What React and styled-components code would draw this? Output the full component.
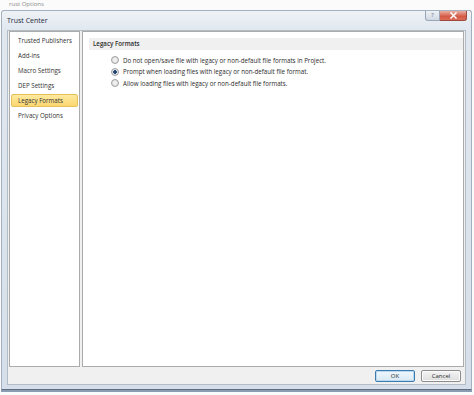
import styled, { createGlobalStyle } from "styled-components";

const GlobalStyle = createGlobalStyle`
  html, body {
    margin: 0;
    padding: 0;
    background: #ffffff;
  }
  body {
    font-family: "Open Sans", "Noto Sans", "Liberation Sans", sans-serif;
    width: 474px;
    height: 395px;
    overflow: hidden;
  }
`;

const navItems = [
  "Trusted Publishers",
  "Add-ins",
  "Macro Settings",
  "DEP Settings",
  "Legacy Formats",
  "Privacy Options",
];

const options = [
  { label: "Do not open/save file with legacy or non-default file formats in Project.", checked: false },
  { label: "Prompt when loading files with legacy or non-default file format.", checked: true },
  { label: "Allow loading files with legacy or non-default file formats.", checked: false },
];

function App() {
  return (
    <>
      <GlobalStyle />
      <Screen>
        <ParentTitle>rust Options</ParentTitle>
        <Window>
          <TitleBar>
            <TitleText>Trust Center</TitleText>
            <Controls>
              <HelpButton>?</HelpButton>
              <CloseButton>
                <svg width="9" height="7" viewBox="0 0 9 7">
                  <path d="M1.5 0.5 L7.5 6.5 M7.5 0.5 L1.5 6.5" stroke="#fff" strokeWidth="1.5" />
                </svg>
              </CloseButton>
            </Controls>
          </TitleBar>
          <Body>
            <Panels>
              <Nav>
                {navItems.map((item) => (
                  <NavItem key={item} $active={item === "Legacy Formats"}>
                    {item}
                  </NavItem>
                ))}
              </Nav>
              <Main>
                <SectionHeader>Legacy Formats</SectionHeader>
                <Options>
                  {options.map((o) => (
                    <OptionRow key={o.label}>
                      <Radio $checked={o.checked} />
                      <span>{o.label}</span>
                    </OptionRow>
                  ))}
                </Options>
              </Main>
            </Panels>
            <Footer>
              <Button $default>OK</Button>
              <Button>Cancel</Button>
            </Footer>
          </Body>
        </Window>
      </Screen>
    </>
  );
}

export default App;

const Screen = styled.div`
  width: 474px;
  height: 395px;
  background: #fbfbfb;
  display: flex;
  flex-direction: column;
`;

const ParentTitle = styled.div`
  height: 10px;
  padding-left: 9px;
  font-size: 6px;
  line-height: 9px;
  color: #8a8a8a;
  white-space: nowrap;
`;

const Window = styled.div`
  flex: 1;
  margin: 0 2px 5px 1px;
  display: flex;
  flex-direction: column;
  background: linear-gradient(180deg, #eef2f6 0%, #e0e7ef 20px, #d6dfe9 100%);
  border: 1px solid #a3b0bf;
  border-bottom: 1px solid #5d6f86;
  border-radius: 3px 3px 0 0;
  box-shadow: 0 2px 0 #8c9cb0;
`;

const TitleBar = styled.div`
  height: 19px;
  display: flex;
  align-items: center;
  justify-content: space-between;
  padding-left: 5px;
`;

const TitleText = styled.div`
  font-size: 7px;
  color: #1d2a3a;
`;

const Controls = styled.div`
  display: flex;
  align-self: flex-start;
  margin-right: 4px;
`;

const HelpButton = styled.div`
  width: 13px;
  height: 9px;
  border: 1px solid #9aa6b5;
  border-top: none;
  border-radius: 0 0 0 3px;
  background: linear-gradient(180deg, #eef2f6, #cfd8e2);
  font-size: 5.5px;
  line-height: 9px;
  text-align: center;
  color: #5a6474;
`;

const CloseButton = styled.div`
  width: 26px;
  height: 9px;
  border: 1px solid #9c4a3e;
  border-top: none;
  border-left: none;
  border-radius: 0 0 3px 0;
  background: linear-gradient(180deg, #eab0a4, #d45a45 60%, #dc6c58);
  display: flex;
  align-items: center;
  justify-content: center;
`;

const Body = styled.div`
  flex: 1;
  display: flex;
  flex-direction: column;
  background: #f0f0f0;
  margin: 0 5px 4px 5px;
  border: 1px solid #b3bdc8;
`;

const Panels = styled.div`
  flex: 1;
  display: flex;
  gap: 2px;
  padding: 0 1px;
`;

const Nav = styled.div`
  width: 69px;
  background: #ffffff;
  border: 1px solid #ababab;
  padding-top: 2px;
  display: flex;
  flex-direction: column;
  gap: 2px;
`;

const NavItem = styled.div`
  font-size: 6.2px;
  color: #333;
  height: 11px;
  line-height: 11px;
  padding-left: 6px;
  margin: 0 1px;
  border-radius: 2px;
  white-space: nowrap;
  background: ${(p) => (p.$active ? "linear-gradient(180deg, #fdeaa0, #fbd770)" : "transparent")};
  border: 1px solid ${(p) => (p.$active ? "#e6c05a" : "transparent")};
`;

const Main = styled.div`
  flex: 1;
  background: #ffffff;
  border: 1px solid #ababab;
  padding: 6px 0 0 6px;
`;

const SectionHeader = styled.div`
  background: #f0f0f0;
  height: 12px;
  line-height: 12px;
  font-size: 6.2px;
  font-weight: 600;
  color: #2b2b2b;
  padding-left: 4px;
`;

const Options = styled.div`
  padding: 5px 0 0 22px;
  display: flex;
  flex-direction: column;
  gap: 1px;
`;

const OptionRow = styled.div`
  display: flex;
  align-items: center;
  gap: 4px;
  height: 10.5px;
  font-size: 6.2px;
  color: #2b2b2b;
  white-space: nowrap;
`;

const Radio = styled.span`
  width: 6px;
  height: 6px;
  border-radius: 50%;
  border: 1px solid #a0a0a0;
  background: ${(p) =>
    p.$checked
      ? "radial-gradient(circle, #2c4a72 0 1.6px, #dfe6ee 2px)"
      : "radial-gradient(circle, #f6f6f6, #dadada)"};
  flex-shrink: 0;
`;

const Footer = styled.div`
  height: 17px;
  display: flex;
  justify-content: flex-end;
  align-items: center;
  gap: 6px;
  padding-right: 4px;
`;

const Button = styled.div`
  width: 38px;
  height: 10px;
  line-height: 10px;
  text-align: center;
  font-size: 6px;
  color: #2b2b2b;
  border-radius: 2px;
  border: 1px solid ${(p) => (p.$default ? "#3d7bad" : "#8c8c8c")};
  background: ${(p) =>
    p.$default
      ? "linear-gradient(180deg, #f0f7fc, #d9e9f5)"
      : "linear-gradient(180deg, #f4f4f4, #dedede)"};
  box-shadow: ${(p) => (p.$default ? "inset 0 0 0 1px #b9d9f2" : "inset 0 0 0 1px #fbfbfb")};
`;
